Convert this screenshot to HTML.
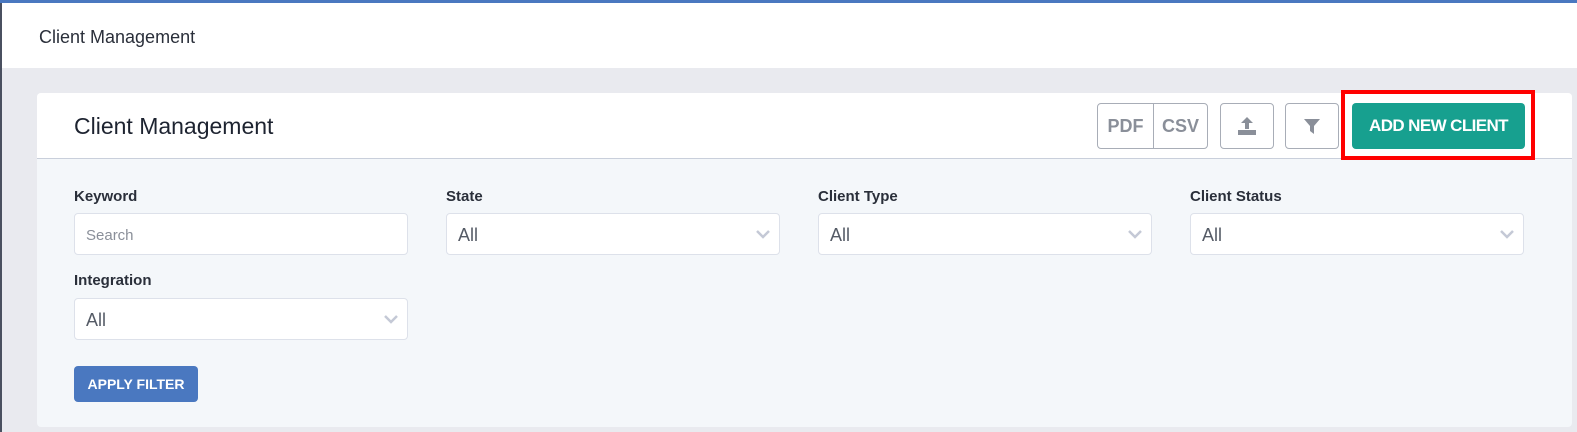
<!DOCTYPE html>
<html><head><style>
*{box-sizing:border-box;margin:0;padding:0}
html,body{background:#e9eaef}
body{width:1577px;height:432px;overflow:hidden;font-family:"Liberation Sans",sans-serif;position:relative}
.top{position:absolute;left:0;top:0;width:1577px;height:3px;background:#4a78c0}
.left{position:absolute;left:0;top:3px;width:2px;height:429px;background:#4a5060}
.hdr{position:absolute;left:2px;top:3px;width:1575px;height:65px;background:#fff}
.hdr span{position:absolute;left:37px;top:24px;font-size:18px;color:#2a2f3a}
.card{position:absolute;left:37px;top:93px;width:1535px;height:334px;background:#f4f7fa;border-radius:4px}
.ch{height:66px;background:#fff;border-bottom:1px solid #c9cfdb;position:relative;border-radius:4px 4px 0 0}
.ch h1{position:absolute;left:37px;top:20px;font-size:23px;font-weight:normal;color:#1d2330}
.btn{position:absolute;top:10px;height:46px;border:1px solid #a8adb7;border-radius:4px;background:#fff;color:#8a8f99;font-weight:bold;font-size:18px;display:flex;align-items:center;justify-content:center}
.lbl{position:absolute;font-size:15px;font-weight:bold;color:#2a2f3a}
.inp{position:absolute;width:334px;height:42px;background:#fff;border:1px solid #dde1ea;border-radius:4px;font-size:18px;color:#555b66;padding:11px 0 0 11px}
.inp svg{position:absolute;right:9px;top:16px}
</style></head><body>
<div class="top"></div><div class="left"></div>
<div class="hdr"><span>Client Management</span></div>
<div class="card">
 <div class="ch"><h1>Client Management</h1>
  <div class="btn" style="left:1060px;width:111px"><span style="width:56px;text-align:center">PDF</span><span style="width:1px;height:44px;background:#a8adb7"></span><span style="width:54px;text-align:center">CSV</span></div>
  <div class="btn" style="left:1183px;width:54px"><svg width="20" height="20" viewBox="0 0 20 20"><path d="M10 1 L16 7 H12 V13 H8 V7 H4 Z" fill="#8a8f99"/><rect x="1" y="14" width="18" height="5" fill="#8a8f99"/></svg></div>
  <div class="btn" style="left:1248px;width:54px"><svg width="18" height="18" viewBox="0 0 18 18"><path d="M1 2 H17 L11 9 V17 L7 14 V9 Z" fill="#8a8f99"/></svg></div>
  <div style="position:absolute;left:1304px;top:-3px;width:194px;height:70px;border:4px solid #f00"></div>
  <div style="position:absolute;left:1315px;top:10px;width:173px;height:46px;background:#17a08f;border-radius:4px;color:#fff;font-weight:bold;font-size:17px;display:flex;align-items:center;justify-content:center;letter-spacing:-0.6px">ADD NEW CLIENT</div>
 </div>
 <div class="lbl" style="left:37px;top:95px">Keyword</div>
 <div class="lbl" style="left:409px;top:95px">State</div>
 <div class="lbl" style="left:781px;top:95px">Client Type</div>
 <div class="lbl" style="left:1153px;top:95px">Client Status</div>
 <div class="inp" style="left:37px;top:120px;font-size:15px;color:#8a8f99;padding-top:13px">Search</div>
 <div class="inp" style="left:409px;top:120px">All<svg width="14" height="9" viewBox="0 0 14 9"><path d="M1 1 L7 7 L13 1" stroke="#c4c9d6" stroke-width="2.5" fill="none"/></svg></div>
 <div class="inp" style="left:781px;top:120px">All<svg width="14" height="9" viewBox="0 0 14 9"><path d="M1 1 L7 7 L13 1" stroke="#c4c9d6" stroke-width="2.5" fill="none"/></svg></div>
 <div class="inp" style="left:1153px;top:120px">All<svg width="14" height="9" viewBox="0 0 14 9"><path d="M1 1 L7 7 L13 1" stroke="#c4c9d6" stroke-width="2.5" fill="none"/></svg></div>
 <div class="lbl" style="left:37px;top:179px">Integration</div>
 <div class="inp" style="left:37px;top:205px">All<svg width="14" height="9" viewBox="0 0 14 9"><path d="M1 1 L7 7 L13 1" stroke="#c4c9d6" stroke-width="2.5" fill="none"/></svg></div>
 <div style="position:absolute;left:37px;top:273px;width:124px;height:36px;background:#4a78c0;border-radius:4px;color:#fff;font-weight:bold;font-size:14px;display:flex;align-items:center;justify-content:center">APPLY FILTER</div>
</div>
</body></html>
